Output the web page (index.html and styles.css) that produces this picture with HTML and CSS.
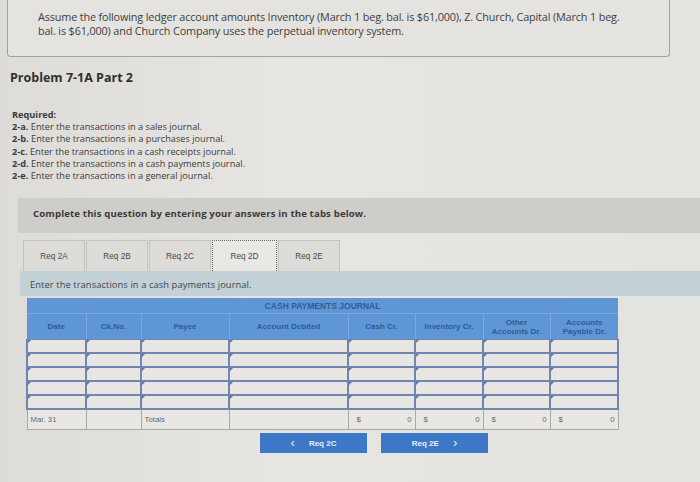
FILE: index.html
```html
<!DOCTYPE html>
<html>
<head>
<meta charset="utf-8">
<link rel="stylesheet" href="styles.css">
</head>
<body>
<div class="page">
  <div class="intro">
    <p>Assume the following ledger account amounts Inventory (March 1 beg. bal. is $61,000), Z. Church, Capital (March 1 beg. bal. is $61,000) and Church Company uses the perpetual inventory system.</p>
  </div>
  <h2 class="title">Problem 7-1A Part 2</h2>
  <div class="required">
    <div class="req-head">Required:</div>
    <div><b>2-a.</b> Enter the transactions in a sales journal.</div>
    <div><b>2-b.</b> Enter the transactions in a purchases journal.</div>
    <div><b>2-c.</b> Enter the transactions in a cash receipts journal.</div>
    <div><b>2-d.</b> Enter the transactions in a cash payments journal.</div>
    <div><b>2-e.</b> Enter the transactions in a general journal.</div>
  </div>
  <div class="band">Complete this question by entering your answers in the tabs below.</div>
  <div class="tabs">
    <div class="tab">Req 2A</div>
    <div class="tab">Req 2B</div>
    <div class="tab">Req 2C</div>
    <div class="tab active">Req 2D</div>
    <div class="tab">Req 2E</div>
  </div>
  <div class="instr">Enter the transactions in a cash payments journal.</div>
  <table class="journal">
    <colgroup>
      <col class="c-date"><col class="c-ck"><col class="c-payee"><col class="c-acct">
      <col class="c-num"><col class="c-num2"><col class="c-num"><col class="c-num2">
    </colgroup>
    <thead>
      <tr class="caption"><th colspan="8">CASH PAYMENTS JOURNAL</th></tr>
      <tr class="heads">
        <th>Date</th><th>Ck.No.</th><th>Payee</th><th>Account Debited</th>
        <th>Cash Cr.</th><th>Inventory Cr.</th><th>Other<br>Accounts Dr.</th><th>Accounts<br>Payable Dr.</th>
      </tr>
    </thead>
    <tbody>
      <tr class="in"><td></td><td></td><td></td><td></td><td></td><td></td><td></td><td></td></tr>
      <tr class="in"><td></td><td></td><td></td><td></td><td></td><td></td><td></td><td></td></tr>
      <tr class="in"><td></td><td></td><td></td><td></td><td></td><td></td><td></td><td></td></tr>
      <tr class="in"><td></td><td></td><td></td><td></td><td></td><td></td><td></td><td></td></tr>
      <tr class="in"><td></td><td></td><td></td><td></td><td></td><td></td><td></td><td></td></tr>
      <tr class="tot">
        <td>Mar. 31</td><td></td><td>Totals</td><td></td>
        <td><span class="d">$</span><span class="z">0</span></td>
        <td><span class="d">$</span><span class="z">0</span></td>
        <td><span class="d">$</span><span class="z">0</span></td>
        <td><span class="d">$</span><span class="z">0</span></td>
      </tr>
    </tbody>
  </table>
  <div class="nav">
    <div class="btn"><span class="chev">&lsaquo;</span>Req 2C</div>
    <div class="btn">Req 2E<span class="chev right">&rsaquo;</span></div>
  </div>
</div>
</body>
</html>
```
FILE: styles.css
```css
html, body {
  margin: 0;
  padding: 0;
}
body {
  width: 700px;
  height: 482px;
  overflow: hidden;
  background: linear-gradient(90deg, #dedcd8 0%, #e6e5e1 40%, #e3e3e0 100%);
  font-family: "Open Sans", "Liberation Sans", sans-serif;
  color: #3b3b3b;
}
.page {
  height: 482px;
}
.intro {
  margin-left: 7px;
  width: 663px;
  height: 57px;
  box-sizing: border-box;
  border: 1px solid #a3a29f;
  border-top: none;
  border-radius: 0 0 4px 4px;
  padding: 10px 40px 0 30px;
  background: #e4e3df;
}
.intro p {
  margin: 0;
  font-size: 10.85px;
  line-height: 14px;
  color: #3e3e3e;
  letter-spacing: -0.15px;
}
.title {
  margin: 13px 0 0 10px;
  font-size: 12.5px;
  line-height: 16px;
  font-weight: 700;
  color: #2f2f2f;
}
.required {
  margin: 23px 0 0 12px;
  font-size: 9.2px;
  line-height: 12.2px;
  color: #3c3c3c;
}
.required b, .req-head {
  font-weight: 700;
}
.band {
  margin: 16px 0 0 18px;
  height: 35px;
  box-sizing: border-box;
  background: #cfcdc9;
  padding: 9px 0 0 15px;
  font-size: 9.6px;
  font-weight: 700;
  color: #3a3a3a;
  letter-spacing: 0.15px;
}
.tabs {
  display: flex;
  margin: 7px 0 0 23px;
  height: 31px;
  gap: 1px;
}
.tab {
  width: 62px;
  box-sizing: border-box;
  border: 1px solid #c4c2bd;
  border-bottom: none;
  background: #dddcd8;
  font-size: 8.2px;
  color: #4a4a4a;
  text-align: center;
  padding-top: 11px;
  font-family: "Liberation Sans", sans-serif;
}
.tab.active {
  width: 65px;
  background: #e9e8e5;
  border: 1px dotted #6a6a6a;
  border-bottom: none;
}
.instr {
  margin-left: 20px;
  height: 25px;
  box-sizing: border-box;
  background: #c3d1d7;
  padding: 7px 0 0 10px;
  font-size: 9.3px;
  color: #3d4448;
  letter-spacing: 0.1px;
}
.journal {
  margin: 2px 0 0 26px;
  border-collapse: collapse;
  table-layout: fixed;
  width: 591px;
  font-family: "Liberation Sans", sans-serif;
}
.c-date { width: 59px; }
.c-ck { width: 55px; }
.c-payee { width: 88px; }
.c-acct { width: 119px; }
.c-num { width: 67px; }
.c-num2 { width: 68px; }
.journal th {
  background: #5e96d6;
  color: #2f5c95;
  font-weight: 700;
  padding: 0;
}
.caption th {
  height: 14px;
  font-size: 8.5px;
  border-bottom: 1px solid #7aa9df;
  padding-top: 1px;
}
.heads th {
  height: 25px;
  line-height: 9px;
  border-left: 1px solid #7aa9df;
  font-size: 8px;
}
.heads th:first-child {
  border-left: none;
}
.in td {
  height: 12px;
  background: #e7e6e3;
  border: 2px solid #7085b0;
  border-top-width: 1px;
  padding: 0;
  position: relative;
}
.in td::before {
  content: "";
  position: absolute;
  left: 0;
  top: 0;
  width: 0;
  height: 0;
  border-top: 3px solid #5a74a8;
  border-right: 3px solid transparent;
}
.tot td {
  height: 19px;
  background: #e8e7e4;
  border: 1px solid #a9a8a5;
  font-size: 7.8px;
  color: #6a6a6a;
  padding: 0 3px;
  white-space: nowrap;
}
.tot td .d {
  float: left;
  padding-left: 5px;
}
.tot td .z {
  float: right;
}
.nav {
  display: flex;
  gap: 14px;
  margin: 3px 0 0 260px;
}
.btn {
  width: 107px;
  height: 20px;
  background: #3d78c8;
  color: #e8eefa;
  font-size: 8px;
  font-weight: 700;
  display: flex;
  align-items: center;
  justify-content: center;
  font-family: "Liberation Sans", sans-serif;
}
.chev {
  font-size: 13px;
  margin-right: 14px;
  font-weight: 400;
  line-height: 10px;
}
.chev.right {
  margin-right: 0;
  margin-left: 14px;
}
```
